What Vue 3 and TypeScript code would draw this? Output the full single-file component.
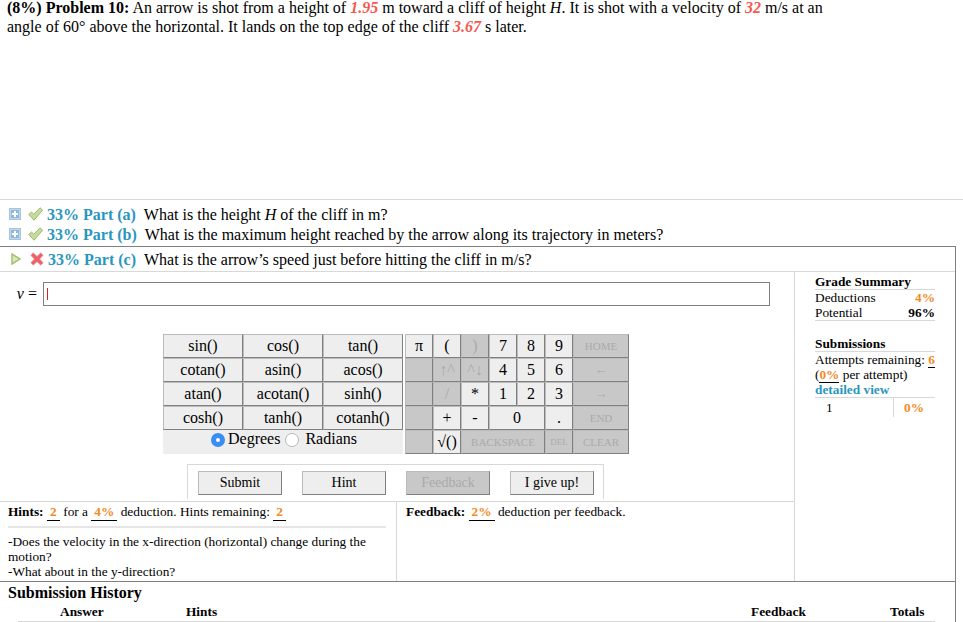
<script setup lang="ts">
interface Key {
  label: string
  off?: boolean
  span?: number
  small?: boolean
  tiny?: boolean
  arrow?: boolean
}

const funcs: string[] = [
  'sin()', 'cos()', 'tan()',
  'cotan()', 'asin()', 'acos()',
  'atan()', 'acotan()', 'sinh()',
  'cosh()', 'tanh()', 'cotanh()',
]

const keys: Key[] = [
  { label: 'π' }, { label: '(' }, { label: ')', off: true }, { label: '7' }, { label: '8' }, { label: '9' }, { label: 'HOME', off: true, span: 2, small: true },
  { label: '', off: true }, { label: '↑^', off: true }, { label: '^↓', off: true }, { label: '4' }, { label: '5' }, { label: '6' }, { label: '←', off: true, span: 2, arrow: true },
  { label: '', off: true }, { label: '/', off: true }, { label: '*' }, { label: '1' }, { label: '2' }, { label: '3' }, { label: '→', off: true, span: 2, arrow: true },
  { label: '', off: true }, { label: '+' }, { label: '-' }, { label: '0', span: 2 }, { label: '.' }, { label: 'END', off: true, span: 2, small: true },
  { label: '', off: true }, { label: '√()' }, { label: 'BACKSPACE', off: true, span: 3, small: true }, { label: 'DEL', off: true, tiny: true }, { label: 'CLEAR', off: true, span: 2, small: true },
]

const actions = [
  { label: 'Submit', off: false },
  { label: 'Hint', off: false },
  { label: 'Feedback', off: true },
  { label: 'I give up!', off: false },
]
</script>

<template>
  <div class="page">
    <div class="problem">
      <b>(8%) Problem 10:</b> An arrow is shot from a height of <b class="given">1.95</b> m toward a cliff of height <i>H</i>. It is shot with a velocity of <b class="given">32</b> m/s at an<br />
      angle of 60° above the horizontal. It lands on the top edge of the cliff <b class="given">3.67</b> s later.
    </div>

    <div class="parts">
      <div class="part-row">
        <svg class="expand" width="12" height="12" viewBox="0 0 12 12">
          <rect x="0.5" y="0.5" width="11" height="11" fill="#c2d9ec" stroke="#a6c4dc" />
          <rect x="2" y="2" width="8" height="8" fill="#8fb6de" />
          <path d="M6 3v6M3 6h6" stroke="#fff" stroke-width="2" />
        </svg>
        <svg class="mark" width="15" height="14" viewBox="0 0 15 14">
          <path d="M0.800 7.500L3.500 5l2.300 2.200L12 0.800 14.600 3.200 6 13.200z" fill="#c6dd9a" stroke="#9ab873" />
        </svg>
        <span class="part-name">33% Part (a)</span>
        <span class="part-q">What is the height <i>H</i> of the cliff in m?</span>
      </div>
      <div class="part-row">
        <svg class="expand" width="12" height="12" viewBox="0 0 12 12">
          <rect x="0.5" y="0.5" width="11" height="11" fill="#c2d9ec" stroke="#a6c4dc" />
          <rect x="2" y="2" width="8" height="8" fill="#8fb6de" />
          <path d="M6 3v6M3 6h6" stroke="#fff" stroke-width="2" />
        </svg>
        <svg class="mark" width="15" height="14" viewBox="0 0 15 14">
          <path d="M0.800 7.500L3.500 5l2.300 2.200L12 0.800 14.600 3.200 6 13.200z" fill="#c6dd9a" stroke="#9ab873" />
        </svg>
        <span class="part-name">33% Part (b)</span>
        <span class="part-q">What is the maximum height reached by the arrow along its trajectory in meters?</span>
      </div>
    </div>

    <div class="panel">
      <div class="part-row current">
        <svg class="tri" width="10" height="12" viewBox="0 0 10 12">
          <path d="M1 1l8 5-8 5z" fill="#dcebb4" stroke="#a6c078" stroke-width="1.500" />
        </svg>
        <svg class="cross" width="14" height="14" viewBox="0 0 14 14">
          <path d="M0.800 3.200L3.200 0.800 7 4.300 10.800 0.800 13.200 3.200 9.700 7 13.200 10.800 10.800 13.200 7 9.700 3.200 13.200 0.800 10.800 4.300 7z" fill="#ee5f68" stroke="#e3a3a7" stroke-width="0.800" />
        </svg>
        <span class="part-name">33% Part (c)</span>
        <span class="part-q">What is the arrow’s speed just before hitting the cliff in m/s?</span>
      </div>

      <div class="panel-body">
        <div class="work">
          <div class="answer-row">
            <span class="answer-label"><i>v</i> =</span>
            <div class="answer-box"><span class="caret"></span></div>
          </div>

          <div class="keypad">
            <div class="func-side">
              <div class="funcs">
                <button v-for="f in funcs" :key="f" class="key">{{ f }}</button>
              </div>
              <div class="units">
                <span class="radio on"></span><span class="unit-a">Degrees</span>
                <span class="radio"></span><span class="unit-b">Radians</span>
              </div>
            </div>
            <div class="keys">
              <button
                v-for="(k, i) in keys"
                :key="i"
                class="key"
                :class="{ off: k.off, small: k.small, tiny: k.tiny, arrow: k.arrow, ['span' + (k.span || 1)]: true }"
              >{{ k.label }}</button>
            </div>
          </div>

          <div class="actions">
            <button v-for="a in actions" :key="a.label" class="action" :class="{ off: a.off }">{{ a.label }}</button>
          </div>

          <div class="help">
            <div class="hints">
              <div class="help-line">
                <b>Hints:</b> <span class="fill">2</span> for a <span class="fill wide">4%</span> deduction. Hints remaining: <span class="fill">2</span>
              </div>
              <div class="rule"></div>
              <div class="hint-text">-Does the velocity in the x-direction (horizontal) change during the<br />motion?<br />-What about in the y-direction?</div>
            </div>
            <div class="feedback">
              <div class="help-line">
                <b>Feedback:</b> <span class="fill wide">2%</span> deduction per feedback.
              </div>
            </div>
          </div>
        </div>

        <aside class="side">
          <div class="side-title">Grade Summary</div>
          <div class="side-line"><span>Deductions</span><b class="orange">4%</b></div>
          <div class="side-line ruled"><span>Potential</span><b>96%</b></div>
          <div class="side-title second">Submissions</div>
          <div class="attempts">Attempts remaining: <b class="orange under">6</b><br />(<b class="orange under">0%</b> per attempt)</div>
          <div class="detail">detailed view</div>
          <div class="tally"><span class="tally-n">1</span><b class="orange tally-p">0%</b></div>
        </aside>
      </div>

      <div class="history">
        <div class="history-title">Submission History</div>
        <div class="history-head">
          <b>Answer</b>
          <b>Hints</b>
          <b>Feedback</b>
          <b>Totals</b>
        </div>
      </div>
    </div>
  </div>
</template>

<style>
html,
body {
  margin: 0;
  background: #fff;
  overflow: hidden;
}
</style>

<style scoped>
.page {
  width: 963px;
  height: 622px;
  overflow: hidden;
  font-family: "Liberation Serif", "Times New Roman", serif;
  font-size: 16px;
  color: #000;
}

.problem {
  box-sizing: border-box;
  height: 201px;
  width: 840px;
  margin-top: -2px;
  padding: 0 7px;
  line-height: 19px;
}

.given {
  color: #f8574f;
  font-style: italic;
}

.parts {
  border-top: 1px solid #d8d8d8;
  padding-top: 5px;
  height: 41px;
}

.part-row {
  display: flex;
  align-items: center;
  height: 20px;
  white-space: nowrap;
}

.expand {
  margin: 0 0 3px 9px;
  flex: none;
}

.mark {
  margin: 0 4px 3px 7px;
  flex: none;
}

.tri {
  margin: 0 0 2px 11px;
  flex: none;
}

.cross {
  margin: 0 4px 3px 9px;
  flex: none;
}

.part-name {
  color: #2a96bd;
  font-weight: bold;
}

.part-q {
  margin-left: 8px;
}

.panel {
  width: 956px;
  box-sizing: border-box;
  border-top: 1px solid #808080;
  border-right: 1px solid #808080;
  height: 380px;
}

.current {
  height: 22px;
  padding-top: 2px;
  border-bottom: 1px solid #d8d8d8;
}

.panel-body {
  display: grid;
  grid-template-columns: 795px 1fr;
  height: 309px;
  border-bottom: 1px solid #808080;
}

.work {
  border-right: 1px solid #d8d8d8;
}

.answer-row {
  display: flex;
  align-items: center;
  padding-top: 10px;
  height: 24px;
}

.answer-label {
  width: 43px;
  box-sizing: border-box;
  padding-right: 6px;
  text-align: right;
}

.answer-box {
  box-sizing: border-box;
  width: 727px;
  height: 24px;
  border: 1px solid #808080;
  display: flex;
  align-items: center;
  padding-left: 3px;
}

.caret {
  width: 1px;
  height: 12px;
  background: #e02020;
}

.keypad {
  display: flex;
  gap: 2px;
  margin: 28px 0 0 163px;
  width: 466px;
}

.func-side {
  width: 240px;
  background: #eee;
}

.funcs {
  display: grid;
  grid-template-columns: repeat(3, 80px);
  grid-auto-rows: 24px;
}

.keys {
  display: grid;
  grid-template-columns: repeat(8, 28px);
  grid-auto-rows: 24px;
}

.key {
  box-sizing: border-box;
  margin: 0;
  padding: 0;
  border: 1px solid;
  border-color: #bbb #808080 #808080 #bbb;
  background: #eee;
  font-family: inherit;
  font-size: 16px;
  line-height: 20px;
  color: #000;
  white-space: nowrap;
  overflow: hidden;
}

.key.off {
  background: #c8c8c8;
  color: #aaa;
}

.key.small {
  font-size: 11px;
}

.key.tiny {
  font-size: 9px;
}

.key.arrow {
  font-size: 13px;
}

.span2 {
  grid-column: span 2;
}

.span3 {
  grid-column: span 3;
}

.units {
  height: 24px;
  display: flex;
  align-items: center;
  padding: 0 0 7px 48px;
  line-height: 18px;
  box-sizing: border-box;
}

.radio {
  box-sizing: border-box;
  width: 14px;
  height: 14px;
  border-radius: 50%;
  background: #fff;
  border: 1px solid #b8b8b8;
  margin-top: 3px;
}

.radio.on {
  border: 5px solid #3a8df5;
}

.unit-a {
  margin: 0 5px 0 3px;
}

.unit-b {
  margin-left: 6px;
}

.actions {
  box-sizing: border-box;
  display: flex;
  width: 417px;
  height: 35px;
  margin: 10px 0 0 187px;
  padding: 6px 0 0 10px;
  gap: 20px;
  border: 1px solid #d8d8d8;
  border-bottom: none;
}

.action {
  box-sizing: border-box;
  width: 84px;
  height: 24px;
  padding: 0;
  border: 1px solid;
  border-color: #bbb #808080 #808080 #bbb;
  background: #eee;
  font-family: inherit;
  font-size: 14px;
  color: #000;
}

.action.off {
  background: #c8c8c8;
  color: #aaa;
}

.help {
  display: grid;
  grid-template-columns: 397px 1fr;
  margin-top: 2px;
  height: 79px;
  border-top: 1px solid #d8d8d8;
  font-size: 13.333px;
}

.hints {
  border-right: 1px solid #d8d8d8;
  padding: 1px 10px 0 8px;
}

.feedback {
  padding: 1px 0 0 9px;
}

.help-line {
  line-height: 18px;
  white-space: nowrap;
}

.fill {
  display: inline-block;
  min-width: 13px;
  line-height: 16px;
  text-align: center;
  color: #f58a1f;
  font-weight: bold;
  border-bottom: 1px solid #000;
}

.fill.wide {
  min-width: 26px;
}

.rule {
  height: 2px;
  background: #e6e6e6;
  margin-top: 5px;
}

.hint-text {
  margin-top: 6px;
  line-height: 15px;
}

.side {
  padding: 2px 20px 0 20px;
  font-size: 13.333px;
  line-height: 15px;
}

.side-title {
  font-weight: bold;
  border-bottom: 1px solid #d8d8d8;
}

.side-title.second {
  margin-top: 15px;
}

.side-line {
  display: flex;
  justify-content: space-between;
}

.side-line.ruled {
  border-bottom: 1px solid #d8d8d8;
}

.attempts {
  white-space: nowrap;
}

.orange {
  color: #f58a1f;
}

.under {
  border-bottom: 1px solid #000;
}

.detail {
  color: #2a96bd;
  font-weight: bold;
  border-bottom: 1px solid #d8d8d8;
}

.tally {
  display: flex;
  height: 19px;
  line-height: 19px;
}

.tally-n {
  width: 79px;
  box-sizing: border-box;
  padding-left: 11px;
  border-right: 1px solid #d8d8d8;
}

.tally-p {
  padding-left: 10px;
}

.history {
  padding-left: 8px;
}

.history-title {
  font-weight: bold;
  font-size: 16px;
  line-height: 21px;
  margin-bottom: -1px;
}

.history-head {
  display: grid;
  grid-template-columns: 126px 565px 139px 1fr;
  margin: 0 20px 0 10px;
  padding-left: 42px;
  border-bottom: 1px solid #d8d8d8;
  font-size: 13.333px;
  line-height: 19px;
}
</style>
